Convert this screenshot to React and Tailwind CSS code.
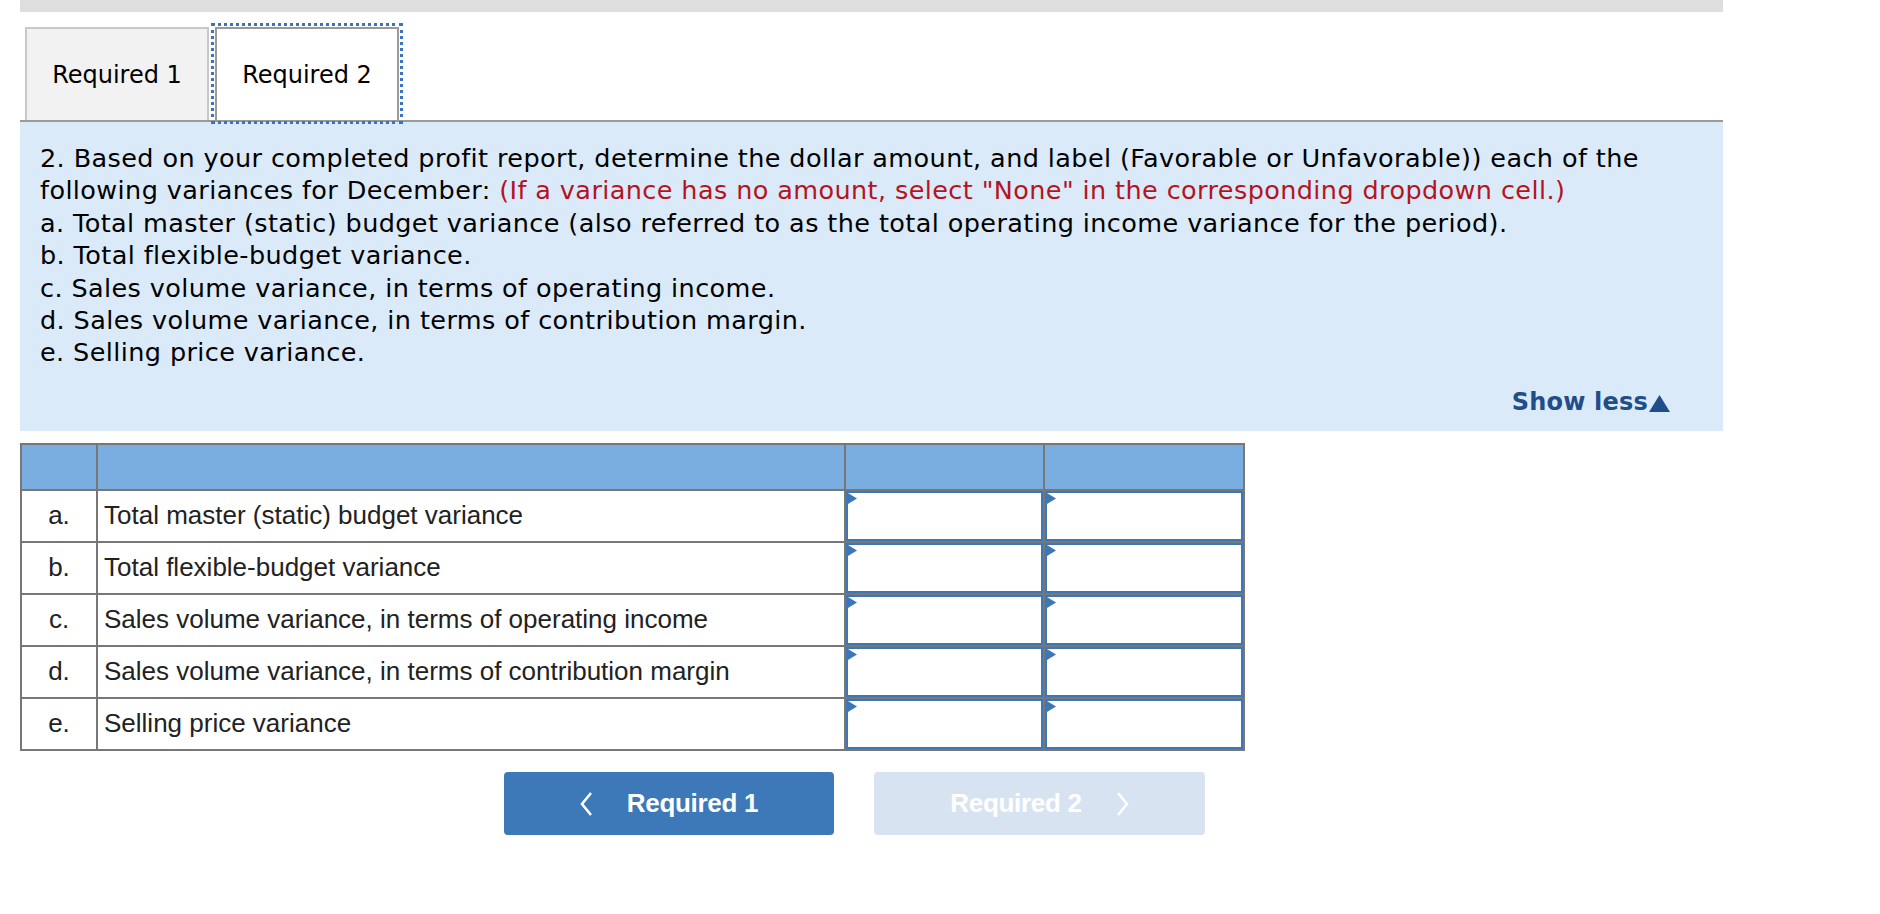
import React from "react";

const rows = [
  ["a.", "Total master (static) budget variance"],
  ["b.", "Total flexible-budget variance"],
  ["c.", "Sales volume variance, in terms of operating income"],
  ["d.", "Sales volume variance, in terms of contribution margin"],
  ["e.", "Selling price variance"],
];

function InputCell({ last }) {
  return (
    <div className={(last ? "w-[200px]" : "w-[199px]") + " h-full border-r-2 border-b-2 border-[#777777]"}>
      <div className="relative h-full w-full border-2 border-[#3d77b8] bg-white">
        <svg className="absolute left-0 top-0" width="9" height="11" viewBox="0 0 9 11">
          <polygon points="0,0 9,5.5 0,11" fill="#3d77b8" />
        </svg>
      </div>
    </div>
  );
}

export default function App() {
  return (
    <div className="w-[1880px] h-[914px] bg-white pl-[20px] text-black">
      <div className="w-[1703px] [font-family:DejaVu_Sans,Verdana,sans-serif]">
        <div className="h-[12px] bg-[#dedede]" />
        <div className="flex items-end pl-[5px] pt-[15px] border-b-2 border-[#9a9a9a]">
          <div className="w-[184px] h-[93px] bg-[#f2f2f2] border-2 border-b-0 border-[#c8c8c8] flex items-center justify-center text-[24px]">
            Required 1
          </div>
          <div className="ml-[6px] w-[184px] h-[93px] bg-white border-2 border-b-0 border-[#9a9a9a] outline-[3px] outline-dotted outline-offset-[1px] outline-[#3a73c0] flex items-center justify-center text-[24px]">
            Required 2
          </div>
        </div>
        <div className="bg-[#dbeaf8] pt-[20px] pb-[13px] pl-[20px] text-[25.5px] tracking-[0.4px] leading-[32.4px]">
          <div className="whitespace-nowrap">
            2. Based on your completed profit report, determine the dollar amount, and label (Favorable or Unfavorable)) each of the
          </div>
          <div className="whitespace-nowrap">
            following variances for December:{" "}
            <span className="text-[#b5141e]">(If a variance has no amount, select "None" in the corresponding dropdown cell.)</span>
          </div>
          <div className="whitespace-nowrap">a. Total master (static) budget variance (also referred to as the total operating income variance for the period).</div>
          <div className="whitespace-nowrap">b. Total flexible-budget variance.</div>
          <div className="whitespace-nowrap">c. Sales volume variance, in terms of operating income.</div>
          <div className="whitespace-nowrap">d. Sales volume variance, in terms of contribution margin.</div>
          <div className="whitespace-nowrap">e. Selling price variance.</div>
          <div className="mt-[17px] flex items-center justify-end pr-[53px] font-bold text-[24px] tracking-[0.2px] text-[#1f4e89]">
            <span>Show less</span>
            <svg className="ml-[1px] mt-[2px]" width="21" height="17" viewBox="0 0 21 17">
              <polygon points="10.5,0 21,17 0,17" fill="#1f4e89" />
            </svg>
          </div>
        </div>
      </div>

      <div className="mt-[12px] w-[1225px] border-l-2 border-t-2 border-[#777777] [font-family:Liberation_Sans,Arial,sans-serif] text-[26px] text-[#222222]">
        <div className="flex h-[46px] bg-[#7aaee1]">
          <div className="w-[76px] border-r-2 border-b-2 border-[#777777]" />
          <div className="w-[748px] border-r-2 border-b-2 border-[#777777]" />
          <div className="w-[199px] border-r-2 border-b-2 border-[#777777]" />
          <div className="w-[200px] border-r-2 border-b-2 border-[#777777]" />
        </div>
        {rows.map(([l, t]) => (
          <div key={l} className="flex h-[52px]">
            <div className="w-[76px] border-r-2 border-b-2 border-[#777777] text-center pt-[10px] leading-[28px]">{l}</div>
            <div className="w-[748px] border-r-2 border-b-2 border-[#777777] pl-[6px] pt-[10px] leading-[28px] whitespace-nowrap">{t}</div>
            <InputCell />
            <InputCell last />
          </div>
        ))}
      </div>

      <div className="mt-[21px] ml-[484px] flex gap-[40px] [font-family:Liberation_Sans,Arial,sans-serif] text-[26px] font-bold text-white">
        <div className="w-[330px] h-[63px] rounded-[4px] bg-[#3d78b8] flex items-center justify-center gap-[34px]">
          <svg width="13" height="24" viewBox="0 0 13 24">
            <polyline points="11,1 2,12 11,23" fill="none" stroke="white" strokeWidth="2.6" />
          </svg>
          <span className="tracking-[-0.3px]">Required 1</span>
        </div>
        <div className="w-[331px] h-[63px] rounded-[4px] bg-[#d8e3f1] flex items-center justify-center gap-[34px]">
          <span className="tracking-[-0.3px]">Required 2</span>
          <svg width="13" height="24" viewBox="0 0 13 24">
            <polyline points="2,1 11,12 2,23" fill="none" stroke="white" strokeWidth="2.6" />
          </svg>
        </div>
      </div>
    </div>
  );
}
